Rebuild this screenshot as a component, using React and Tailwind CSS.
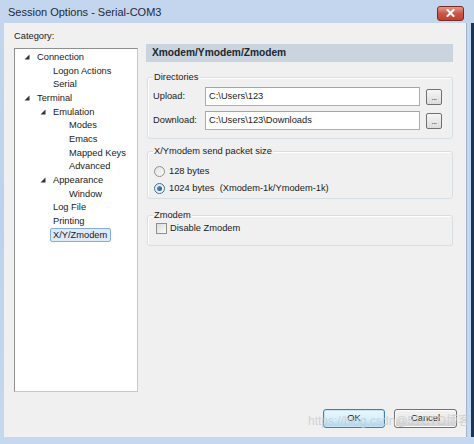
import React from "react";

const F = { fontFamily: '"Liberation Sans", Arial, "Noto Sans CJK SC", sans-serif' };

function Tri() {
  return (
    <svg width="6" height="6" viewBox="0 0 6 6" className="shrink-0">
      <polygon points="5.5,0.5 5.5,5.5 0.5,5.5" fill="#333" />
    </svg>
  );
}

function TreeRow({ level, expander, label, selected }) {
  const indents = ["pl-[9px]", "pl-[25px]", "pl-[41px]"];
  return (
    <div className={`flex h-[13.7px] items-center ${indents[level]}`}>
      <div className="w-[13px] flex items-center">{expander ? <Tri /> : null}</div>
      <span
        className={
          selected
            ? "-ml-[3px] pl-[2px] pr-[3px] leading-[12px] border border-[#84acdd] bg-[#dfeaf8] rounded-[2px]"
            : "leading-[12px]"
        }
      >
        {label}
      </span>
    </div>
  );
}

function Group({ title, children, className = "" }) {
  return (
    <div className={`relative border border-[#d5dfe5] rounded-[3px] shadow-[inset_1px_1px_0_#fff] ${className}`}>
      <span className="absolute -top-[8px] left-[5px] bg-[#f0f0f0] px-[1px] leading-[14px]">{title}</span>
      {children}
    </div>
  );
}

function DirRow({ label, value }) {
  return (
    <div className="flex items-center h-[19px]">
      <span className="w-[57px] pl-[5px]">{label}</span>
      <div className="w-[215px] h-[19px] bg-white border border-[#abadb3] border-t-[#a0a5ad] flex items-center pl-[3px]">
        {value}
      </div>
      <div className="ml-[6px] w-[16px] h-[16px] border border-[#707070] rounded-[2px] bg-gradient-to-b from-[#f6f6f6] to-[#dcdcdc] flex items-end justify-center pb-[3px] text-[8px] leading-[6px] tracking-[-0.5px]">
        ...
      </div>
    </div>
  );
}

export default function App() {
  return (
    <div
      style={F}
      className="w-[474px] h-[444px] relative overflow-hidden bg-gradient-to-b from-[#c3d6ed] via-[#bcd2ec] to-[#c5d8ef] text-[9.3px] text-[#1a1a1a] flex flex-col"
    >
      {/* title bar */}
      <div className="h-[23px] flex items-center pl-[8px] pr-[10px] shrink-0">
        <span className="text-[11px] text-[#1e2a3a] mt-[2px]">Session Options - Serial-COM3</span>
        <div className="ml-auto mt-[3px] w-[27px] h-[15px] rounded-[3px] border border-[#7a2a22] bg-gradient-to-b from-[#e39a8c] via-[#cb5646] to-[#c2402f] flex items-center justify-center">
          <svg width="9" height="8" viewBox="0 0 9 8">
            <path d="M1.5 1 L7.5 7 M7.5 1 L1.5 7" stroke="#fff" strokeWidth="2" strokeLinecap="square" />
          </svg>
        </div>
      </div>
      {/* body */}
      <div className="flex flex-1 pl-[4px] pb-[7px]">
        <div className="flex-1 bg-[#f0f0f0] border-r border-[#9fb5cf] flex flex-col relative">
          <div className="flex">
            {/* left column */}
            <div className="w-[138px] flex flex-col pl-[10px] pt-[6px]">
              <div className="h-[19px] leading-[14px]">Category:</div>
              <div className="w-[124px] h-[344px] bg-white border border-[#8e8f8f] border-r-[#c8c8c8] border-b-[#c8c8c8] pt-[1px]">
                <TreeRow level={0} expander label="Connection" />
                <TreeRow level={1} label="Logon Actions" />
                <TreeRow level={1} label="Serial" />
                <TreeRow level={0} expander label="Terminal" />
                <TreeRow level={1} expander label="Emulation" />
                <TreeRow level={2} label="Modes" />
                <TreeRow level={2} label="Emacs" />
                <TreeRow level={2} label="Mapped Keys" />
                <TreeRow level={2} label="Advanced" />
                <TreeRow level={1} expander label="Appearance" />
                <TreeRow level={2} label="Window" />
                <TreeRow level={1} label="Log File" />
                <TreeRow level={1} label="Printing" />
                <TreeRow level={1} label="X/Y/Zmodem" selected />
              </div>
            </div>
            {/* right column */}
            <div className="w-[307px] ml-[4px] pt-[21px] flex flex-col">
              <div className="h-[18px] bg-[#c9d4df] flex items-center pl-[6px] font-bold text-[10.2px] text-[#20262c]">
                Xmodem/Ymodem/Zmodem
              </div>
              <Group title="Directories" className="mt-[15px] h-[62px] ml-[1px] pt-[9px]">
                <DirRow label="Upload:" value="C:\Users\123" />
                <div className="h-[5px]" />
                <DirRow label="Download:" value="C:\Users\123\Downloads" />
              </Group>
              <Group title="X/Ymodem send packet size" className="mt-[12px] h-[48px] ml-[1px] pt-[11px] pl-[6px]">
                <div className="flex items-center h-[17px]">
                  <span className="w-[11px] h-[11px] rounded-full border border-[#8f8f8f] bg-gradient-to-br from-[#e2e2e2] to-[#fafafa]" />
                  <span className="ml-[4px]">128 bytes</span>
                </div>
                <div className="flex items-center h-[17px]">
                  <span className="w-[11px] h-[11px] rounded-full border border-[#3c6f9e] bg-gradient-to-br from-[#e6e6e6] to-[#fafafa] flex items-center justify-center">
                    <span className="w-[5px] h-[5px] rounded-full bg-gradient-to-br from-[#5aa0d8] to-[#1f4f83]" />
                  </span>
                  <span className="ml-[4px] whitespace-pre">1024 bytes  (Xmodem-1k/Ymodem-1k)</span>
                </div>
              </Group>
              <Group title="Zmodem" className="mt-[16px] h-[31px] ml-[1px] pt-[6px] pl-[8px]">
                <div className="flex items-center h-[13px]">
                  <span className="w-[11px] h-[11px] border border-[#8f8f8f] bg-gradient-to-br from-[#dcdcdc] to-[#fbfbfb]" />
                  <span className="ml-[3px]">Disable Zmodem</span>
                </div>
              </Group>
            </div>
          </div>
          {/* buttons */}
          <div className="flex-1 flex items-start justify-end pr-[9px] pt-[17px] gap-[9px]">
            <div className="w-[62px] h-[19px] rounded-[3px] border border-[#3c7fb1] shadow-[inset_0_0_0_1px_#c4e5f6] bg-gradient-to-b from-[#eaf6fd] via-[#d9f0fc] to-[#a7d9f5] flex items-center justify-center">
              OK
            </div>
            <div className="w-[63px] h-[19px] rounded-[3px] border border-[#707070] shadow-[inset_0_0_0_1px_#fcfcfc] bg-gradient-to-b from-[#f2f2f2] via-[#ebebeb] to-[#cfcfcf] flex items-center justify-center">
              Cancel
            </div>
          </div>
          <span className="absolute right-[-4px] bottom-[7px] text-[12px] text-[#c8ccd0] opacity-80 whitespace-nowrap">
            https://blog.csdn@51CTO博客
          </span>
        </div>
        <div className="w-[4px] bg-[#c3d7ee]" />
        <div className="w-[3px] bg-[#1d3550]" />
      </div>
    </div>
  );
}
